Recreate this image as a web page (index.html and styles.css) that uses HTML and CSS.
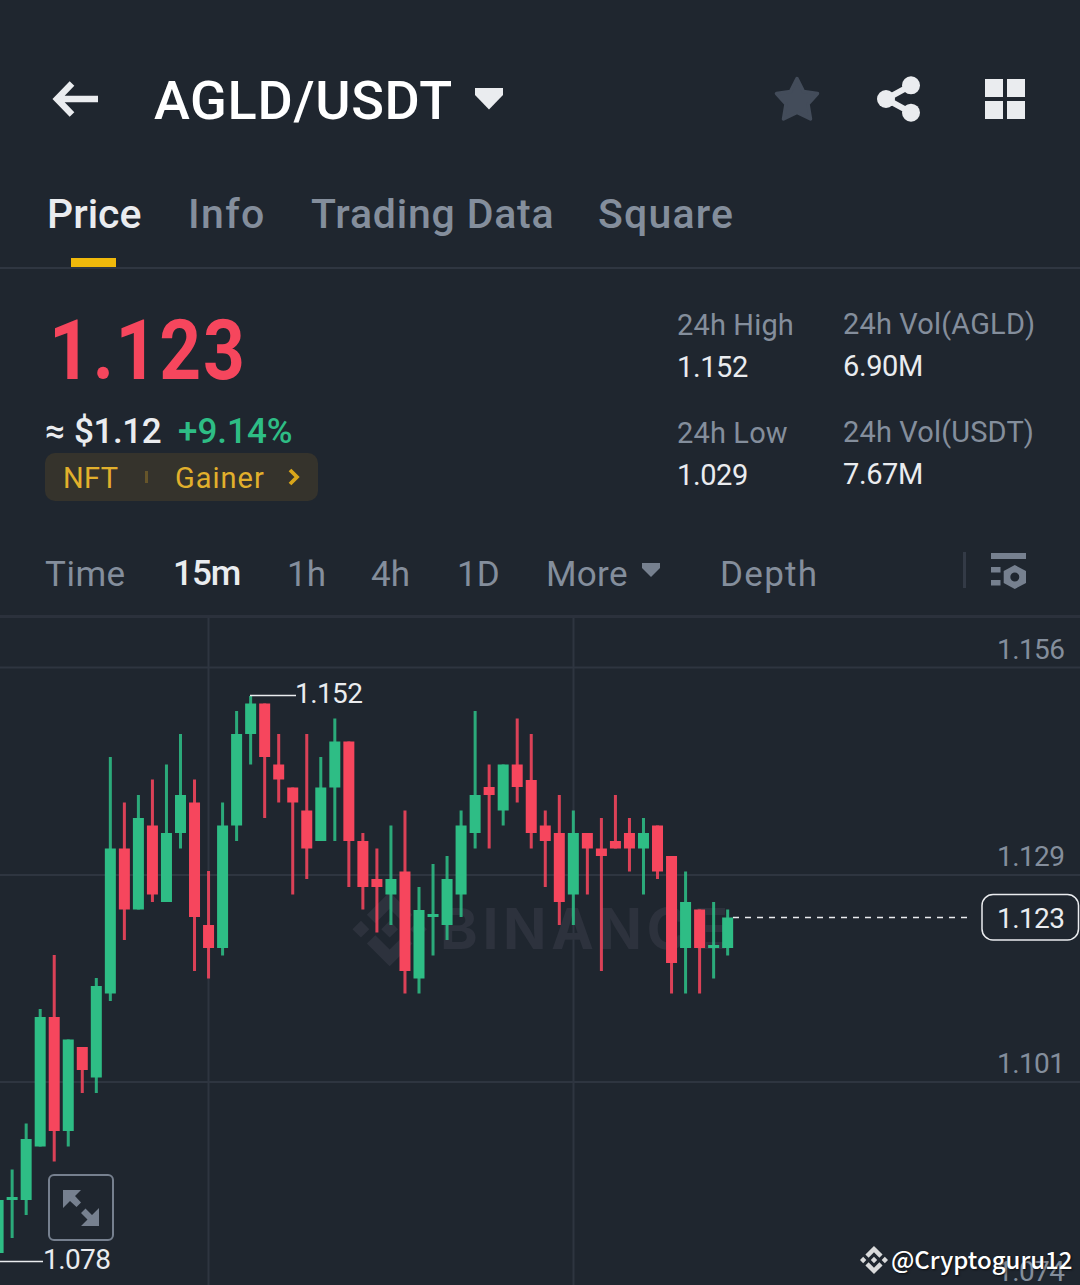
FILE: index.html
```html
<!doctype html>
<html lang="en">
  <head>
    <meta charset="UTF-8" />
    <meta name="viewport" content="width=device-width, initial-scale=1.0" />
    <title>AGLD/USDT</title>
    <link rel="stylesheet" href="styles.css">
  </head>
  <body>
    <div class="container">
      <header class="header">
        <svg class="back" width="48" height="40" viewBox="0 0 48 40">
          <path d="M20 3.500 5 19l15 15.500M5 19h41" fill="none" stroke="#eaecef" stroke-width="6.500" />
        </svg>
        <h1 class="pair">AGLD/USDT</h1>
        <svg class="caret" width="28" height="22" viewBox="0 0 28 22">
          <path d="M0 0h28v7L14 21.500 0 7z" fill="#eaecef" />
        </svg>
        <div class="actions">
          <svg width="46" height="46" viewBox="0 0 46 46">
            <path d="M23 2.500 29.500 15.500 43.500 17.500 34 28 36.500 43 23 36.500 9.500 43 12 28 2.500 17.500 16.500 15.500z" fill="#434c5a" stroke="#434c5a" stroke-width="3.500" stroke-linejoin="round" />
          </svg>
          <svg width="44" height="46" viewBox="0 0 44 46">
            <path d="M34 9.300 9 23l25 13.700" fill="none" stroke="#eaecef" stroke-width="6" />
            <circle cx="9" cy="23" r="9" fill="#eaecef" />
            <circle cx="34" cy="9.300" r="9" fill="#eaecef" />
            <circle cx="34" cy="36.700" r="9" fill="#eaecef" />
          </svg>
          <svg width="40" height="40" viewBox="0 0 40 40">
            <path d="M0 0h18v18H0zM22 0h18v18H22zM0 22h18v18H0zM22 22h18v18H22z" fill="#eaecef" />
          </svg>
        </div>
      </header>

      <nav class="tabs">
        <a class="tab active">Price</a>
        <a class="tab info">Info</a>
        <a class="tab trading">Trading Data</a>
        <a class="tab square">Square</a>
      </nav>

      <section class="summary">
        <div class="main">
          <p class="price">1.123</p>
          <p class="sub"><span class="approx">≈</span><span class="usd">$1.12</span><span class="change">+9.14%</span></p>
          <div class="tags">
            <span class="nft">NFT</span>
            <i></i>
            <span class="gainer">Gainer</span>
            <svg width="12" height="18" viewBox="0 0 12 18">
              <path d="M2 2l7 7-7 7" fill="none" stroke="#d9a61a" stroke-width="3.800" />
            </svg>
          </div>
        </div>
        <dl class="stats">
          <dt class="high">24h High</dt>
          <dd>1.152</dd>
          <dt class="low">24h Low</dt>
          <dd>1.029</dd>
        </dl>
        <dl class="stats vol">
          <dt class="agld">24h Vol(AGLD)</dt>
          <dd>6.90M</dd>
          <dt class="usdt">24h Vol(USDT)</dt>
          <dd>7.67M</dd>
        </dl>
      </section>

      <div class="periods">
        <span class="time">Time</span>
        <span class="m15 active">15m</span>
        <span class="h1">1h</span>
        <span class="h4">4h</span>
        <span class="d1">1D</span>
        <span class="more">More</span>
        <svg class="more-caret" width="18" height="14" viewBox="0 0 18 14">
          <path d="M0 0h18v5L9 14 0 5z" fill="#76808f" />
        </svg>
        <span class="depth">Depth</span>
        <i class="divider"></i>
        <svg class="setting" width="36" height="38" viewBox="0 0 36 38">
          <path d="M1 1h35v6H1zM1 15h9.500v5.500H1zM1 28h9.500v5.500H1zM24.800 13 36 19v12l-11.200 6L13.700 31V19zm0 7.500a4.500 4.500 0 1 0 0 9 4.500 4.500 0 1 0 0-9z" fill="#76808f" fill-rule="evenodd" />
        </svg>
      </div>

      <div class="chart">
        <svg class="plot" width="1080" height="667" viewBox="0 618 1080 667">
          <defs>
            <path id="logo" d="M16.624 13.920l2.717 2.715-7.353 7.353-7.353-7.352 2.717-2.716 4.636 4.660 4.636-4.660zm4.637-4.636L24 12l-2.715 2.716L18.568 12l2.693-2.716zm-9.272 0l2.716 2.692-2.716 2.717L9.272 12l2.717-2.715zm-9.272 0L5.409 12l-2.692 2.692L0 12l2.716-2.716zM11.989.012l7.353 7.329-2.717 2.715-4.636-4.635-4.636 4.659-2.717-2.715z" />
          </defs>
          <path class="grid" d="M0 667.500H1080M0 875H1080M0 1082H1080M208.500 618V1285M573.500 618V1285" />
          <g class="watermark">
            <use href="#logo" transform="translate(352.500 892) scale(3.100)" />
            <text x="440" y="949" textLength="288">BINANCE</text>
          </g>
          <g id="candles"></g>
          <path class="mark" d="M250 695.500H296M0 1261.500H43" />
          <path class="mark dash" d="M733 917.500H968" />
          <text class="label" x="295" y="703">1.152</text>
          <text class="label" x="43" y="1269">1.078</text>
          <text class="label axis" x="997" y="659">1.156</text>
          <text class="label axis" x="997" y="866">1.129</text>
          <text class="label axis" x="997" y="1073">1.101</text>
          <text class="label axis" x="997" y="1281">1.074</text>
          <rect class="current" x="982" y="894.500" width="96.500" height="45.500" rx="11" />
          <text class="label" x="997" y="928">1.123</text>
        </svg>
        <div class="fullscreen">
          <svg width="36" height="36" viewBox="0 0 36 36">
            <path d="M0 0h18l-6 6 6 6.500-4.500 4.500L7 11l-7 7zM36 36H18l6.500-6.500L18 23l4.500-4.500L29 25l7-7z" fill="#76808f" />
          </svg>
        </div>
        <div class="author">
          <svg width="28" height="28" viewBox="0 0 24 24"><use href="#logo" fill="#d9dadb" /></svg>
          <span>@Cryptoguru12</span>
        </div>
      </div>
    </div>
    <script>
      // [up, high, body top, body bottom, low]
      const data = [
        [1, 1200, 1200, 1253, 1253],
        [1, 1169.5, 1197, 1200, 1238],
        [1, 1123.5, 1139, 1200, 1215],
        [1, 1009, 1017, 1146.5, 1146.5],
        [0, 955, 1017, 1131, 1161.5],
        [1, 1039.5, 1039.5, 1131, 1146.5],
        [0, 1047, 1047, 1070, 1093],
        [1, 978, 986, 1077.5, 1093],
        [1, 757, 848.5, 993.5, 1001],
        [0, 802.5, 848.5, 909.5, 940],
        [1, 795, 818, 909.5, 909.5],
        [0, 779.5, 825.5, 894.5, 902],
        [1, 764.5, 833, 902, 902],
        [1, 734, 795, 833, 848.5],
        [0, 779.5, 802.5, 917, 971],
        [0, 871, 925, 948, 978.5],
        [1, 802.5, 825.5, 948, 955.5],
        [1, 711, 734, 825.5, 841],
        [1, 696, 703.5, 734, 764.5],
        [0, 703.5, 703.5, 757, 818],
        [0, 734, 764.5, 779.5, 802.5],
        [0, 787.5, 787.5, 802.5, 894.5],
        [0, 734, 810.5, 848.5, 879],
        [1, 757, 787.5, 841, 841],
        [1, 718.5, 741.5, 787.5, 841],
        [0, 741.5, 741.5, 841, 887],
        [0, 833, 841, 887, 909.5],
        [0, 848.5, 879, 887, 932.5],
        [1, 825.5, 879, 894.5, 925],
        [0, 810.5, 871.5, 971, 993.5],
        [1, 887, 910, 978.5, 993.5],
        [1, 864, 914, 917, 955.5],
        [1, 856, 879, 925, 940],
        [1, 810.5, 825.5, 894.5, 917],
        [1, 711, 795, 833, 848.5],
        [0, 764.5, 787, 795, 848.5],
        [1, 764.5, 764.5, 810.5, 825.5],
        [0, 718.5, 764.5, 787, 802.5],
        [0, 734, 780, 833, 848.5],
        [0, 810.5, 825.5, 841, 887],
        [0, 795, 833, 902, 925],
        [1, 810.5, 833, 894.5, 925],
        [0, 833, 833, 848.5, 894.5],
        [0, 818, 848.5, 856, 971],
        [0, 795, 841, 848.5, 848.5],
        [0, 818, 833, 848.5, 871.5],
        [1, 818, 833, 848.5, 894.5],
        [0, 825.5, 825.5, 871.5, 879],
        [0, 856, 856, 963, 993.5],
        [1, 871.5, 902, 948, 993.5],
        [0, 909.5, 909.5, 948, 993.5],
        [1, 902, 945, 948, 978.5],
        [1, 909.5, 917.5, 948, 955.5],
      ];
      const candles = document.querySelector("#candles");
      candles.innerHTML = data
        .map(([up, high, top, bottom, low], i) => {
          const x = -1.9 + i * 14.03;
          return `<g class="${up ? "up" : "down"}">
            <rect class="wick" x="${x - 1.5}" y="${high}" width="3" height="${low - high}" />
            <rect x="${x - 5.5}" y="${top}" width="11" height="${bottom - top}" />
          </g>`;
        })
        .join("");
    </script>
  </body>
</html>
```
FILE: styles.css
```css
* {
  box-sizing: border-box;
}
body {
  margin: 0;
  background: #1f262f;
  font-family: Roboto, "Liberation Sans", sans-serif;
  color: #eaecef;
}
h1,
p,
dl,
dd {
  margin: 0;
}
svg {
  display: block;
  flex-shrink: 0;
}
.container {
  width: 1080px;
  height: 1285px;
  overflow: hidden;
}
.header {
  display: flex;
  align-items: center;
  height: 150px;
  padding: 48px 55px 0 52px;
}
.back {
  margin-top: 2px;
}
.pair {
  width: 320px;
  margin-left: 54px;
  padding-top: 4px;
  font-size: 54px;
  font-weight: 500;
  letter-spacing: 0.7px;
  line-height: 64px;
  color: #fff;
  white-space: nowrap;
}
.caret {
  margin-left: 1px;
}
.actions {
  display: flex;
  align-items: center;
  margin-left: auto;
}
.actions svg:nth-child(2) {
  margin-left: 57px;
}
.actions svg:nth-child(3) {
  margin-left: 64px;
}
.tabs {
  display: grid;
  grid-template-columns: 141px 123px 287px 200px;
  height: 119px;
  padding: 14px 0 0 47px;
  border-bottom: 2px solid #2f3641;
  font-size: 41px;
  font-weight: 500;
  line-height: 100px;
  white-space: nowrap;
}
.tab {
  color: #848e9c;
}
.info {
  letter-spacing: 1.4px;
}
.trading {
  letter-spacing: 0.8px;
}
.square {
  letter-spacing: 1.2px;
}
.tab.active {
  position: relative;
  color: #eaecef;
}
.tab.active::after {
  content: "";
  position: absolute;
  left: 24px;
  bottom: 0;
  width: 45px;
  height: 9px;
  background: #f0b90b;
}
.summary {
  display: flex;
  height: 261px;
  padding: 35px 0 0 45px;
  white-space: nowrap;
}
.main {
  width: 632px;
  padding-top: 5px;
}
.price {
  margin-left: 4px;
  font-size: 83px;
  font-weight: 700;
  letter-spacing: 2px;
  line-height: 84px;
  color: #f6465d;
  transform: scaleX(0.88);
  transform-origin: left;
}
.sub {
  display: flex;
  margin-top: 17px;
  font-size: 35px;
  font-weight: 500;
  line-height: 44px;
}
.approx {
  width: 29px;
}
.usd {
  width: 104px;
  letter-spacing: -0.4px;
}
.change {
  color: #2ebd85;
}
.tags {
  display: flex;
  align-items: center;
  width: 273px;
  height: 48px;
  margin-top: -1px;
  padding-left: 18px;
  border-radius: 10px;
  background: #35332c;
  font-size: 29px;
  color: #e2b02c;
}
.tags span {
  padding-top: 2px;
}
.tags i {
  width: 3px;
  height: 12px;
  background: #66552a;
}
.nft {
  width: 82px;
  letter-spacing: 0.4px;
}
.gainer {
  width: 113px;
  margin-left: 27px;
  letter-spacing: 1px;
}
.stats {
  width: 165px;
  font-size: 29px;
  line-height: 42px;
}
.stats.vol {
  width: 230px;
  margin: -1px 0 0 1px;
}
.stats dt {
  color: #848e9c;
  letter-spacing: 0.15px;
}
.stats dd {
  margin-bottom: 24px;
  letter-spacing: -0.4px;
}
.periods {
  display: flex;
  align-items: center;
  height: 88px;
  padding: 0 0 0 45px;
  border-bottom: 3px solid #2b313c;
  font-size: 35px;
  line-height: 44px;
  color: #848e9c;
  white-space: nowrap;
}
.periods span {
  flex-shrink: 0;
  padding-top: 5px;
}
.periods .active {
  padding-top: 3px;
  font-weight: 500;
  letter-spacing: -1px;
  color: #eaecef;
}
.time {
  width: 128px;
  letter-spacing: 0.5px;
}
.m15 {
  width: 114px;
}
.h1 {
  width: 84px;
}
.h4 {
  width: 86px;
}
.d1 {
  width: 89px;
}
.more {
  width: 96px;
  letter-spacing: 0.3px;
}
.more-caret {
  margin: -5px 60px 0 0;
}
.depth {
  width: 243px;
  letter-spacing: 1.3px;
}
.divider {
  width: 3px;
  height: 36px;
  margin-top: -5px;
  background: #333a46;
}
.setting {
  margin: -3px 0 0 24px;
}
.chart {
  position: relative;
  height: 667px;
}
.grid {
  fill: none;
  stroke: #2e3540;
  stroke-width: 2;
}
.watermark {
  fill: #2d323d;
  font: 700 57px Inter, sans-serif;
}
.up {
  fill: #2ebd85;
}
.down {
  fill: #f6465d;
}
.wick {
  opacity: 0.88;
}
.mark {
  fill: none;
  stroke: #eaecef;
  stroke-width: 1.5;
}
.dash {
  stroke-dasharray: 6 6;
}
.label {
  font-size: 28px;
  letter-spacing: -0.6px;
  fill: #eaecef;
}
.axis {
  fill: #848e9c;
}
.current {
  fill: #1f262f;
  stroke: #eaecef;
  stroke-width: 1.5;
}
.fullscreen {
  position: absolute;
  left: 48px;
  top: 556px;
  display: flex;
  align-items: center;
  justify-content: center;
  width: 66px;
  height: 67px;
  border: 2px solid #76808f;
  border-radius: 6px;
}
.author {
  position: absolute;
  left: 860px;
  top: 624px;
  display: flex;
  align-items: center;
  font: 500 24px/38px "Noto Sans CJK SC", "Noto Sans", sans-serif;
  color: #fff;
  text-shadow: 1px 1px 2px #000000aa;
}
.author span {
  margin: -2px 0 0 3px;
}
```
